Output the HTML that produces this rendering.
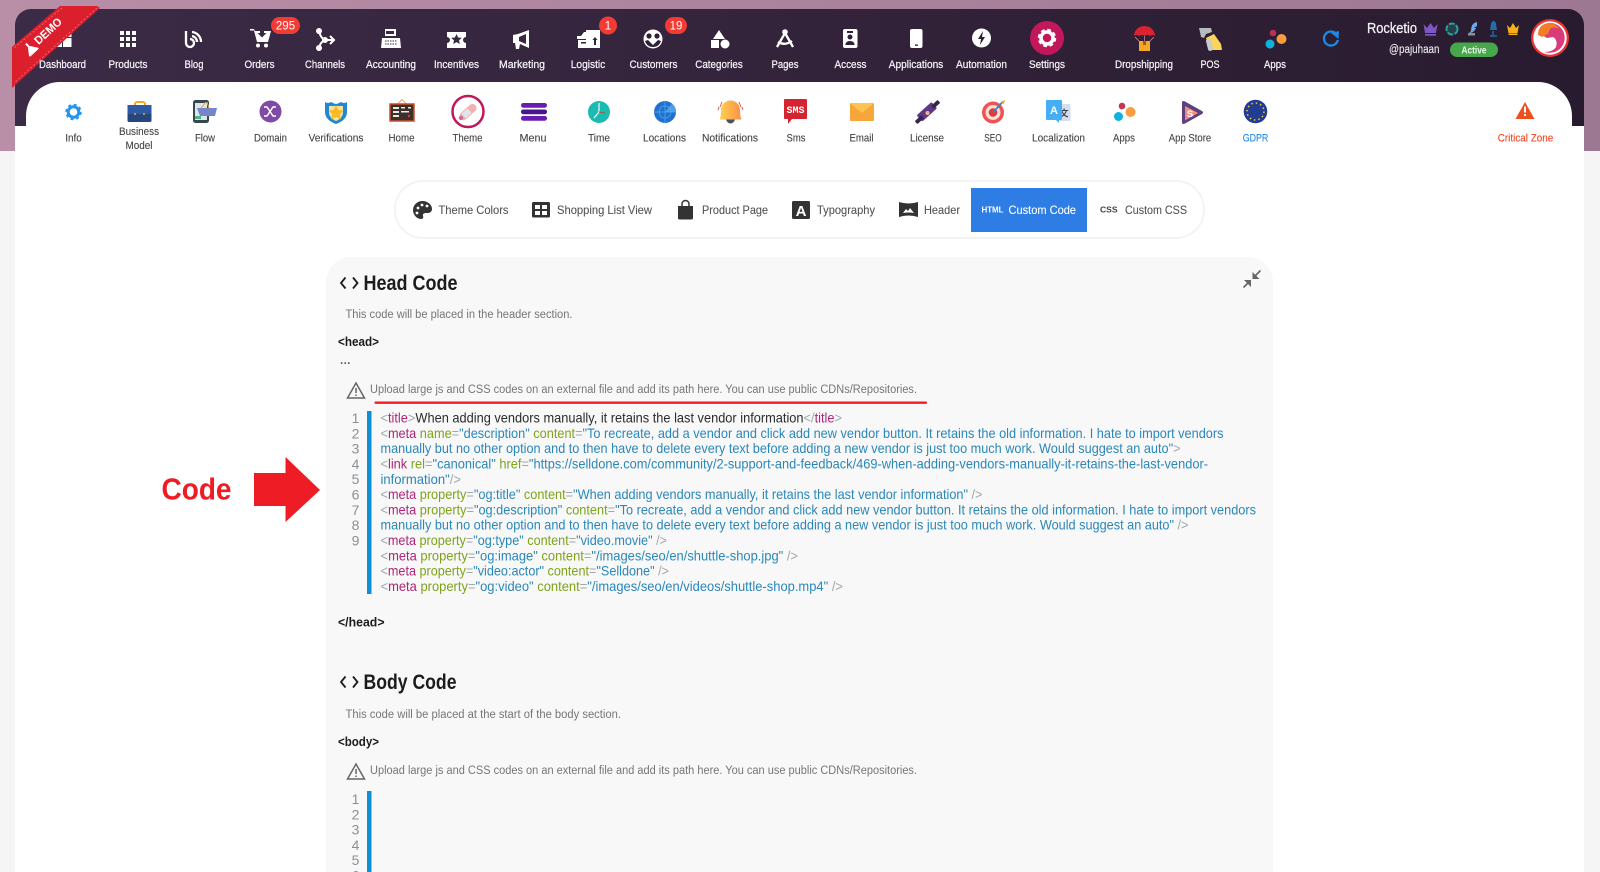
<!DOCTYPE html>
<html><head><meta charset="utf-8"><title>Custom Code</title>
<style>
html,body{margin:0;padding:0;width:1600px;height:872px;overflow:hidden;background:#fff}
svg{display:block}
text{font-family:"Liberation Sans",Arial,sans-serif}
.n{font-size:11px;fill:#f4f1f5;text-anchor:middle;stroke:#f4f1f5;stroke-width:.25}
.m{font-size:11px;fill:#444;text-anchor:middle;stroke:#444;stroke-width:.12}
.tb{font-size:12px;fill:#555;stroke:#555;stroke-width:.1}
.c{font-size:14px}
.t{fill:#ad2579}.a{fill:#7ea31a}.s{fill:#2a87ba}.p{fill:#a2a7ab}.d{fill:#2b2b2b}
.l{font-size:14px;fill:#8a9096;text-anchor:middle}
.h{font-size:21px;font-weight:bold;fill:#1c1c1c}
.g{font-size:11.5px;fill:#767676}
.k{font-size:12.5px;font-weight:bold;fill:#1c1c1c}
</style></head><body>
<svg width="1600" height="872" viewBox="0 0 1600 872" xmlns="http://www.w3.org/2000/svg">
<defs>
<linearGradient id="pk" x1="0" x2="1" y1="0" y2="0"><stop offset="0" stop-color="#b98ea7"/><stop offset="1" stop-color="#9d7893"/></linearGradient>
<linearGradient id="dk" x1="0" x2="1" y1="0" y2="0"><stop offset="0" stop-color="#3c2b46"/><stop offset="1" stop-color="#291b2f"/></linearGradient>
<linearGradient id="bell" x1="0" x2="1" y1="0" y2="0"><stop offset="0" stop-color="#ffd24f"/><stop offset="1" stop-color="#fb8f46"/></linearGradient>
<linearGradient id="st" x1="0" x2="1" y1="1" y2="0"><stop offset="0" stop-color="#e77fa0"/><stop offset="1" stop-color="#f7a35a"/></linearGradient>
</defs>
<rect width="1600" height="872" fill="#f5f5f5"/>
<rect width="1600" height="151" fill="url(#pk)"/>
<rect x="15" y="100" width="1569" height="772" fill="#fff"/>
<path d="M15 126V25a16 16 0 0 1 16-16H1568a16 16 0 0 1 16 16V126Z" fill="url(#dk)"/>
<path d="M26 126V116a34 34 0 0 1 34-34H1538a34 34 0 0 1 34 34V126Z" fill="#fff"/>

<!-- top nav icons -->
<g fill="#fff">
<!-- dashboard -->
<rect x="54" y="38" width="8" height="9"/><rect x="63" y="38" width="8.500" height="9"/><rect x="63" y="30" width="8.500" height="7"/>
<!-- products -->
<g><rect x="120" y="31" width="4" height="4"/><rect x="126" y="31" width="4" height="4"/><rect x="132" y="31" width="4" height="4"/><rect x="120" y="37" width="4" height="4"/><rect x="126" y="37" width="4" height="4"/><rect x="132" y="37" width="4" height="4"/><rect x="120" y="43" width="4" height="4"/><rect x="126" y="43" width="4" height="4"/><rect x="132" y="43" width="4" height="4"/></g>
<!-- blog -->
<g fill="none" stroke="#fff" stroke-width="2.300"><path d="M186 31V43a4 4 0 1 0 4-4"/><path d="M192 32a10 10 0 0 1 9 10"/><path d="M192 36a6 6 0 0 1 5 6"/></g>
<!-- orders -->
<path d="M250 29h4l.8 2H271l-3 11h-11l-3-11.500h-4Z"/><circle cx="258" cy="45.500" r="2"/><circle cx="266" cy="45.500" r="2"/><path d="M260 29h4v4h2.500l-4.500 4.500-4.500-4.500h2.500Z" fill="#3a2a44"/>
<!-- channels -->
<g fill="none" stroke="#fff" stroke-width="2"><path d="M319 31q2 9 8 9h7M319 48q2-8 8-8M330 36l4 4-4 4"/></g><circle cx="319" cy="31" r="3"/><circle cx="319" cy="48" r="3"/><circle cx="325" cy="40" r="3"/>
<!-- accounting -->
<path d="M385 29h11v7h-11Z"/><path d="M382 38h18l1 10h-20Z"/><path d="M386 31h8v3h-8Z" fill="#3a2a44"/><path d="M385 41h12M385 44h12" stroke="#37273f" stroke-width="1" stroke-dasharray="1.500 1"/>
<!-- incentives -->
<path d="M447 32h19v5a3 3 0 0 0 0 6v5h-19v-5a3 3 0 0 0 0-6Z"/><path d="M456.500 34l1.600 3.500 3.700.4-2.800 2.500.8 3.600-3.300-1.900-3.300 1.900.8-3.600-2.800-2.500 3.700-.4Z" fill="#37273f"/>
<!-- marketing -->
<path d="M513 35l5-1 11-4v18l-9-4-1 5h-3l-1-6h-2Z"/><path d="M519 37l7-3v10l-7-3Z" fill="#37273f"/>
<!-- logistic -->
<path d="M586 30h14v18h-14Z"/><path d="M577 36h13v3h-13ZM578 40h11v8h-11Z"/><path d="M581 36l3-4h5l2 4Z"/><path d="M595 37l2.500 3h-1.500v5h-2v-5h-1.500Z" fill="#30223a"/><rect x="581" y="42" width="5" height="1.500" fill="#30223a"/>
<!-- customers -->
<circle cx="653" cy="39" r="9.500"/><circle cx="649" cy="36" r="2.600" fill="#30213a"/><circle cx="657" cy="36" r="2.600" fill="#30213a"/><path d="M645 41q2 6 8 6t8-6l-3-1-5 5-5-5Z" fill="#30213a"/>
<!-- categories -->
<path d="M719 30l6 9h-12Z"/><rect x="711" y="40" width="8" height="8"/><circle cx="725" cy="44" r="4.500"/>
<!-- pages -->
<g fill="none" stroke="#fff" stroke-width="2.300"><path d="M785 33l-8 14M785 33l8 14M778 42q7 4 14-1"/></g><circle cx="785" cy="32" r="2.800"/>
<!-- access -->
<rect x="843" y="29" width="14.500" height="19" rx="2"/><rect x="847" y="31" width="6" height="2" fill="#2f2037"/><circle cx="850" cy="37" r="2.500" fill="#2f2037"/><path d="M845.500 45q0-4 4.500-4t4.500 4Z" fill="#2f2037"/>
<!-- applications -->
<rect x="910" y="29" width="12.500" height="19" rx="2"/><rect x="915" y="44.500" width="3" height="1.300" fill="#2f2037"/>
<!-- automation -->
<circle cx="981.500" cy="38" r="9.500"/><path d="M983 31l-5 8h3l-1 6 5-8h-3Z" fill="#2d1f35"/>
<!-- settings -->
<circle cx="1047" cy="38" r="17" fill="#c2185b"/>
<g transform="translate(1047 38)"><circle r="7.500" fill="none" stroke="#fff" stroke-width="3.500" stroke-dasharray="3.400 2.490"/><circle r="6" fill="none" stroke="#fff" stroke-width="3.500"/></g>
</g>

<!-- dropshipping -->
<path d="M1134 36a10.500 10 0 0 1 21 0q-2.500-2-5 0q-3-2-5.500 0q-2.500-2-5 0q-3-2-5.500 0Z" fill="#d9232e"/>
<path d="M1135 37l7 7M1154 37l-7 7M1144.500 36v8" stroke="#f5a0a0" stroke-width=".6" fill="none"/>
<rect x="1139" y="41" width="11" height="10" fill="#f9a825"/><rect x="1143" y="41" width="3" height="4" fill="#a8561a"/>
<!-- POS -->
<path d="M1199 28h12l1 4-6 2-2 4-3-1-1-5Z" fill="#b6bbc0"/><path d="M1206 38l8-4 7 10 1 6h-10l-3-1Z" fill="#fdd45a"/><rect x="1207" y="39" width="5" height="12" rx="2" transform="rotate(-14 1209 45)" fill="#c8ccd0"/>
<!-- apps -->
<circle cx="1273" cy="33" r="3.300" fill="#b83350"/><circle cx="1281.500" cy="39" r="5" fill="#fb9d3c"/><circle cx="1270" cy="44" r="4.500" fill="#0db2dd"/>
<!-- refresh -->
<path d="M1337 35a7 7 0 1 0 .8 5" fill="none" stroke="#1e88e5" stroke-width="2.300"/><path d="M1331 33l8-2-.5 8Z" fill="#1e88e5"/>

<!-- ribbon -->
<path d="M60 6H97l3 2L12 88V47Z" fill="#dc1f2c"/>
<path d="M62 8L14 48M97 8L14 83" stroke="#f58a90" stroke-width=".6" stroke-dasharray="2 2" fill="none"/>
<path d="M29 42v4l-5 7a1 1 0 0 0 1 1.500h10a1 1 0 0 0 1-1.500l-5-7v-4Z" transform="rotate(-43 30 48)" fill="#fff"/>
<text x="48" y="35" font-size="11.500" font-weight="bold" fill="#fff" text-anchor="middle" transform="rotate(-43 48 31)" textLength="33" lengthAdjust="spacingAndGlyphs">DEMO</text>

<!-- sub icons -->
<g transform="translate(73.500 112)"><circle r="6.500" fill="none" stroke="#2196f3" stroke-width="3.500" stroke-dasharray="2.600 2.500"/><circle r="5.300" fill="none" stroke="#2196f3" stroke-width="3"/></g>
<path d="M134 104a3 3 0 0 1 3-3h6a3 3 0 0 1 3 3v2h-2v-2a1 1 0 0 0-1-1h-6a1 1 0 0 0-1 1v2h-2Z" fill="#f6a623"/><rect x="127.500" y="105" width="24" height="17" rx="1.500" fill="#26467f"/><rect x="127.500" y="105" width="24" height="9" fill="#2e5aa5"/><circle cx="135" cy="114" r="1" fill="#f6a623"/><circle cx="144" cy="114" r="1" fill="#f6a623"/>
<rect x="193" y="100" width="16" height="23" rx="2.500" fill="#37474f"/><rect x="195" y="103" width="12" height="17" fill="#d7e8ea"/><path d="M197 108h20l-2 8h-15Z" fill="#7585c7"/><path d="M201 108l5-6M209 108l-2-6" stroke="#f6a623" stroke-width="1" fill="none"/><rect x="195" y="116" width="6" height="3" fill="#51b37f"/>
<circle cx="270.500" cy="111.500" r="11" fill="#7e4aa6"/><path d="M264 107h3l6 9h3M264 116h3l6-9h3" fill="none" stroke="#fff" stroke-width="1.500"/>
<path d="M325 102q3 2 6 0 4 2 5 2 1 0 5-2 3 2 6 0v10q0 8-11 12-11-4-11-12Z" fill="#1e88d5"/><path d="M329 106h14v6q0 6-7 9-7-3-7-9Z" fill="#f7e1a0"/><path d="M336 105l2.500 5 5 .5-3.700 3.500 1 5.500-4.800-2.800-4.800 2.800 1-5.500-3.700-3.500 5-.5Z" fill="#fbb924"/>
<path d="M402 99.500l-5 5h10Z" fill="none" stroke="#f1a26a" stroke-width="1"/><rect x="390" y="104" width="24" height="17" fill="#3d2f2a" stroke="#c9502f" stroke-width="1.500"/><g fill="#e7e7e7"><rect x="393" y="107" width="6" height="2"/><rect x="393" y="111" width="6" height="2"/><rect x="393" y="115" width="6" height="2"/><rect x="401" y="107" width="4" height="1.500"/><rect x="401" y="111" width="8" height="1.500"/><rect x="408" y="107" width="3" height="1.500"/></g><circle cx="409" cy="116" r="1.200" fill="#e53935"/>
<circle cx="468" cy="111.500" r="15.500" fill="#fff" stroke="#c2185b" stroke-width="2.500"/><rect x="458" y="108" width="20" height="8" rx="4" transform="rotate(-42 468 112)" fill="#f2b1ac"/><rect x="462" y="109" width="8" height="6" transform="rotate(-42 468 112)" fill="#dfe7ee"/><circle cx="461" cy="118" r="2.200" fill="#c770a0"/>
<rect x="521" y="103" width="26" height="4.700" rx="2.300" fill="#6a1bb0"/><rect x="521" y="109.500" width="26" height="4.700" rx="2.300" fill="#4a148c"/><rect x="521" y="116" width="26" height="4.700" rx="2.300" fill="#6a1bb0"/>
<circle cx="599" cy="112" r="11" fill="#1dbab2"/><path d="M599 103v9l-5 6" stroke="#fff" stroke-width="1.100" fill="none"/><path d="M599 112l6 1" stroke="#9c5a3a" stroke-width="1" fill="none"/>
<circle cx="665" cy="112" r="11" fill="#1f72cf"/><path d="M665 112l7-8.500a11 11 0 0 1 4 8.500Z" fill="#4f9fe8"/><path d="M654 112h22M665 101v22" stroke="#5aa8ec" stroke-width=".7" fill="none"/><circle cx="665" cy="112" r="6" fill="none" stroke="#5aa8ec" stroke-width=".7"/>
<path d="M730.500 100.500a9.500 9.500 0 0 1 9.500 9.500q0 7 1.500 9.500h-22q1.500-2.500 1.500-9.500a9.500 9.500 0 0 1 9.500-9.500Z" fill="url(#bell)"/><path d="M726 119.500h9q-1.500 4-4.500 4t-4.500-4Z" fill="#47505d"/><path d="M720 107l2-5M741 107l-2-5M718 110l1-3M743 110l-1-3" stroke="#e2574c" stroke-width="1" fill="none"/>
<path d="M785 99h21a1 1 0 0 1 1 1v18a1 1 0 0 1-1 1h-14l-4 5v-5h-3a1 1 0 0 1-1-1v-18a1 1 0 0 1 1-1Z" fill="#d32430"/><text x="795.500" y="113" font-size="10" font-weight="bold" fill="#fff" text-anchor="middle" textLength="18" lengthAdjust="spacingAndGlyphs" style="font-family:'Liberation Mono',monospace">SMS</text>
<rect x="850" y="103" width="24" height="18" rx="1" fill="#f7a63b"/><path d="M850 103h24l-12 10Z" fill="#fec44f"/>
<rect x="917" y="107.500" width="20" height="8.500" rx="1.500" transform="rotate(-42 927 112)" fill="#5e3a86"/><rect x="934" y="100" width="4" height="9" rx="1" transform="rotate(48 936 104)" fill="#34274a"/><rect x="917" y="115" width="4" height="9" rx="1" transform="rotate(48 919 120)" fill="#34274a"/><circle cx="927.500" cy="113" r="2" fill="#f1b58f"/>
<circle cx="993" cy="112.500" r="11" fill="#ef5350"/><circle cx="993" cy="112.500" r="7.500" fill="#fbe0dd"/><circle cx="993" cy="112.500" r="4.300" fill="#e53935"/><path d="M993 112.500l10-11" stroke="#2f86d8" stroke-width="1.800"/><path d="M1001 102l4-2-1 4Z" fill="#f6a623"/>
<rect x="1057" y="104" width="13.500" height="17" rx="1" fill="#d5def0"/><text x="1064" y="116.500" font-size="9" font-weight="bold" fill="#37474f" text-anchor="middle" style="font-family:'Liberation Sans','Noto Sans CJK SC',sans-serif">文</text><path d="M1047 100h14a1 1 0 0 1 1 1v18a1 1 0 0 1-1 1h-2v3l-3-3h-9a1 1 0 0 1-1-1v-18a1 1 0 0 1 1-1Z" fill="#45aef5"/><text x="1054" y="114" font-size="11" font-weight="bold" fill="#fff" text-anchor="middle">A</text>
<circle cx="1122" cy="106" r="3.300" fill="#c8344f"/><circle cx="1130.500" cy="112" r="5" fill="#fb9d3c"/><circle cx="1118.500" cy="116.500" r="4.500" fill="#0db2dd"/>
<path d="M1182 103q0-3 3-1.500l17 9.500q2 1.500 0 3l-17 9.500q-3 1.500-3-1.500Z" fill="#5e3f7f"/><path d="M1185 106l13 7-13 7.500Z" fill="url(#st)"/><text x="1190" y="117" font-size="9.500" font-weight="bold" fill="#fff" text-anchor="middle">S</text>
<circle cx="1255.500" cy="111.500" r="11.800" fill="#233c93"/><circle cx="1255.500" cy="111.500" r="8.500" fill="none" stroke="#f6cb2f" stroke-width="1.500" stroke-dasharray="1.500 2.950"/>
<path d="M1525 102l9.500 17h-19Z" fill="#ef4f1e"/><rect x="1524" y="106.500" width="2" height="6" fill="#fff"/><rect x="1524" y="114" width="2" height="2" fill="#fff"/>

<!-- badges -->
<rect x="271" y="17" width="29" height="17" rx="8.500" fill="#f33b33"/><text x="285.500" y="29.500" font-size="11.500" fill="#fff" text-anchor="middle">295</text>
<circle cx="608" cy="25.500" r="9" fill="#f33b33"/><text x="608" y="29.500" font-size="11.500" fill="#fff" text-anchor="middle">1</text>
<rect x="665" y="17" width="22" height="17" rx="8.500" fill="#f33b33"/><text x="676" y="29.500" font-size="11.500" fill="#fff" text-anchor="middle">19</text>

<!-- top labels -->
<text class="n" x="62.500" y="68" textLength="47" lengthAdjust="spacingAndGlyphs">Dashboard</text>
<text class="n" x="128" y="68" textLength="39" lengthAdjust="spacingAndGlyphs">Products</text>
<text class="n" x="194" y="68" textLength="19" lengthAdjust="spacingAndGlyphs">Blog</text>
<text class="n" x="259.500" y="68" textLength="30" lengthAdjust="spacingAndGlyphs">Orders</text>
<text class="n" x="325" y="68" textLength="40" lengthAdjust="spacingAndGlyphs">Channels</text>
<text class="n" x="391" y="68" textLength="50" lengthAdjust="spacingAndGlyphs">Accounting</text>
<text class="n" x="456.500" y="68" textLength="45" lengthAdjust="spacingAndGlyphs">Incentives</text>
<text class="n" x="522" y="68" textLength="46" lengthAdjust="spacingAndGlyphs">Marketing</text>
<text class="n" x="588" y="68" textLength="34.500" lengthAdjust="spacingAndGlyphs">Logistic</text>
<text class="n" x="653.500" y="68" textLength="48" lengthAdjust="spacingAndGlyphs">Customers</text>
<text class="n" x="719" y="68" textLength="47.500" lengthAdjust="spacingAndGlyphs">Categories</text>
<text class="n" x="785" y="68" textLength="27" lengthAdjust="spacingAndGlyphs">Pages</text>
<text class="n" x="850.500" y="68" textLength="32" lengthAdjust="spacingAndGlyphs">Access</text>
<text class="n" x="916" y="68" textLength="54.500" lengthAdjust="spacingAndGlyphs">Applications</text>
<text class="n" x="981.500" y="68" textLength="51" lengthAdjust="spacingAndGlyphs">Automation</text>
<text class="n" x="1047" y="68" textLength="36" lengthAdjust="spacingAndGlyphs">Settings</text>
<text class="n" x="1144" y="68" textLength="58" lengthAdjust="spacingAndGlyphs">Dropshipping</text>
<text class="n" x="1210" y="68" textLength="19" lengthAdjust="spacingAndGlyphs">POS</text>
<text class="n" x="1275" y="68" textLength="22" lengthAdjust="spacingAndGlyphs">Apps</text>

<!-- user -->
<text x="1367" y="33" font-size="14.500" fill="#f2eff4" stroke="#f2eff4" stroke-width=".3" textLength="50" lengthAdjust="spacingAndGlyphs">Rocketio</text>
<text x="1389" y="53" font-size="11.500" fill="#e8e4ea" stroke="#e8e4ea" stroke-width=".15" textLength="50.500" lengthAdjust="spacingAndGlyphs">@pajuhaan</text>
<rect x="1450" y="42.500" width="48" height="14.500" rx="7.250" fill="#47a84b"/>
<text x="1474" y="53.700" font-size="10.500" font-weight="bold" fill="#eef7ee" text-anchor="middle" textLength="25" lengthAdjust="spacingAndGlyphs">Active</text>
<path d="M1423.500 24l3.500 4 3.500-5 3.500 5 3.500-4-1.500 9h-11Z" fill="#7e57c2"/><rect x="1425" y="34" width="11" height="1.700" fill="#7e57c2"/>
<circle cx="1452" cy="29" r="5.500" fill="#263f4b" stroke="#2aa198" stroke-width="2" stroke-dasharray="6 1.500"/>
<path d="M1477 22q-6 1-6 9l-2 2q5 0 7-5l-2 0 3-2Z" fill="#6ea6ea"/><rect x="1468" y="33" width="7" height="2.500" fill="#8a8f94"/>
<path d="M1491 24a2.500 3 0 0 1 5 0l1 6h-7Z" fill="#1f6fa8"/><path d="M1493 31v4M1490 36h7" stroke="#1f6fa8" stroke-width="1.400" fill="none"/>
<path d="M1507 25l3 3 3-5 3 5 3-3-1.500 8h-9Z" fill="#fbb01a"/><rect x="1508.500" y="33.500" width="9" height="1.500" fill="#fbb01a"/>
<circle cx="1550" cy="38" r="19" fill="#e8352f"/><circle cx="1550" cy="38" r="16.700" fill="#fff"/>
<path d="M1548 23a15 15 0 0 1 9 28q-6 3-13 1q9 0 12-5 2-7-3-10l-6 1-5-3q1-8 6-12Z" fill="#d83a7a"/><path d="M1538 35q0-11 11-12 7 0 10 6-5-3-9 0l-2 5-6 3Z" fill="#f57c26"/>

<!-- tabs -->
<rect x="395" y="181" width="809" height="57" rx="28" fill="#fff" stroke="#f3f3f3" stroke-width="2"/>
<rect x="971" y="188" width="116" height="44" fill="#2d7de4"/>
<path d="M422.500 201a9.500 9 0 0 0-9.500 9c0 5 4 9 8 9 2.500 0 2.500-2 2-3-.5-2 1-3 3-3h2c2.500 0 4-2 4-4 0-4.500-4.500-8-9.500-8Z" fill="#333"/><circle cx="418" cy="208" r="1.400" fill="#fff"/><circle cx="422" cy="205" r="1.400" fill="#fff"/><circle cx="427" cy="206" r="1.400" fill="#fff"/><circle cx="417" cy="213" r="1.400" fill="#fff"/>
<text class="tb" x="438.500" y="214" textLength="70" lengthAdjust="spacingAndGlyphs">Theme Colors</text>
<rect x="532" y="202" width="18" height="15.500" rx="1.500" fill="#333"/><g fill="#fff"><rect x="535" y="205" width="5" height="4"/><rect x="542" y="205" width="5" height="4"/><rect x="535" y="211" width="5" height="4"/><rect x="542" y="211" width="5" height="4"/></g>
<text class="tb" x="557" y="214" textLength="95" lengthAdjust="spacingAndGlyphs">Shopping List View</text>
<path d="M678 206h15v12a1.500 1.500 0 0 1-1.500 1.500h-12a1.500 1.500 0 0 1-1.500-1.500Z" fill="#333"/><path d="M682 207v-3a3.500 3.500 0 0 1 7 0v3" fill="none" stroke="#333" stroke-width="1.500"/>
<text class="tb" x="702" y="214" textLength="66" lengthAdjust="spacingAndGlyphs">Product Page</text>
<rect x="792" y="201" width="18" height="18" rx="1.500" fill="#333"/><text x="801" y="216" font-size="15" font-weight="bold" fill="#fff" text-anchor="middle">A</text>
<text class="tb" x="817" y="214" textLength="58" lengthAdjust="spacingAndGlyphs">Typography</text>
<path d="M899 202q9.500 3 19 0v15q-9.500-3-19 0Z" fill="#333"/><path d="M903 213l3-4 2 2 2-3 4 5q-5-1-11 0Z" fill="#fff"/>
<text class="tb" x="924" y="214" textLength="36" lengthAdjust="spacingAndGlyphs">Header</text>
<text x="981.500" y="212.500" font-size="8" font-weight="bold" fill="#fff" textLength="22" lengthAdjust="spacingAndGlyphs">HTML</text>
<text class="tb" x="1008.500" y="214" textLength="67.500" lengthAdjust="spacingAndGlyphs" style="fill:#fff;stroke:#fff">Custom Code</text>
<text x="1100" y="212.500" font-size="8" font-weight="bold" fill="#444" textLength="17.500" lengthAdjust="spacingAndGlyphs">CSS</text>
<text class="tb" x="1125" y="214" textLength="62" lengthAdjust="spacingAndGlyphs">Custom CSS</text>

<!-- panel -->
<path d="M326 872V282a25 25 0 0 1 25-25H1248a25 25 0 0 1 25 25V872Z" fill="#f8f8f8"/>
<path d="M1260.500 270.500l-6 6M1243.500 287.500l-5 0" stroke="none" fill="none"/>
<path d="M1260.500 270.500l-5.500 5.500M1243.500 287.500l5.500-5.500" stroke="#666" stroke-width="1.600" fill="none"/>
<path d="M1252.500 279v-7l7 7ZM1251 280v7l-7-7Z" fill="#666"/>

<!-- head -->
<path d="M345.500 277.500l-4.500 5.500 4.500 5.500M353 277.500l4.500 5.500-4.500 5.500" fill="none" stroke="#1c1c1c" stroke-width="1.800"/>
<text class="h" x="363.500" y="290" textLength="94" lengthAdjust="spacingAndGlyphs">Head Code</text>
<text class="g" x="345.500" y="318" textLength="227" lengthAdjust="spacingAndGlyphs">This code will be placed in the header section.</text>
<text class="k" x="338" y="346" textLength="41" lengthAdjust="spacingAndGlyphs">&lt;head&gt;</text>
<text x="340" y="364" font-size="12" font-weight="bold" fill="#666" textLength="10.500" lengthAdjust="spacing">...</text>
<path d="M356 383l8.500 15h-17Z" fill="none" stroke="#666" stroke-width="1.500"/><rect x="355.300" y="388" width="1.500" height="5" fill="#666"/><rect x="355.300" y="394.500" width="1.500" height="1.500" fill="#666"/>
<text class="g" x="370" y="393" textLength="547" lengthAdjust="spacingAndGlyphs">Upload large js and CSS codes on an external file and add its path here. You can use public CDNs/Repositories.</text>
<rect x="374.500" y="401.500" width="552.500" height="2.400" rx="1" fill="#ee1c25"/>

<rect x="367" y="411" width="4.500" height="183" fill="#0e8fd6"/>
<g><text class="l" x="355.500" y="423">1</text><text class="l" x="355.500" y="438.300">2</text><text class="l" x="355.500" y="453.600">3</text><text class="l" x="355.500" y="468.900">4</text><text class="l" x="355.500" y="484.200">5</text><text class="l" x="355.500" y="499.500">6</text><text class="l" x="355.500" y="514.800">7</text><text class="l" x="355.500" y="530.100">8</text><text class="l" x="355.500" y="545.400">9</text></g>

<g transform="translate(0 -.4)">
<text class="c" x="380.500" y="423" textLength="461.500" lengthAdjust="spacingAndGlyphs"><tspan class="p">&lt;</tspan><tspan class="t">title</tspan><tspan class="p">&gt;</tspan><tspan class="d">When adding vendors manually, it retains the last vendor information</tspan><tspan class="p">&lt;/</tspan><tspan class="t">title</tspan><tspan class="p">&gt;</tspan></text>
<text class="c" x="380.500" y="438.300" textLength="843" lengthAdjust="spacingAndGlyphs"><tspan class="p">&lt;</tspan><tspan class="t">meta</tspan> <tspan class="a">name</tspan><tspan class="p">=</tspan><tspan class="s">"description"</tspan> <tspan class="a">content</tspan><tspan class="p">=</tspan><tspan class="s">"To recreate, add a vendor and click add new vendor button. It retains the old information. I hate to import vendors</tspan></text>
<text class="c" x="380.500" y="453.600" textLength="800" lengthAdjust="spacingAndGlyphs"><tspan class="s">manually but no other option and to then have to delete every text before adding a new vendor is just too much work. Would suggest an auto"</tspan><tspan class="p">&gt;</tspan></text>
<text class="c" x="380.500" y="468.900" textLength="827.500" lengthAdjust="spacingAndGlyphs"><tspan class="p">&lt;</tspan><tspan class="t">link</tspan> <tspan class="a">rel</tspan><tspan class="p">=</tspan><tspan class="s">"canonical"</tspan> <tspan class="a">href</tspan><tspan class="p">=</tspan><tspan class="s">"https://selldone.com/community/2-support-and-feedback/469-when-adding-vendors-manually-it-retains-the-last-vendor-</tspan></text>
<text class="c" x="380.500" y="484.200" textLength="80.500" lengthAdjust="spacingAndGlyphs"><tspan class="s">information"</tspan><tspan class="p">/&gt;</tspan></text>
<text class="c" x="380.500" y="499.500" textLength="602" lengthAdjust="spacingAndGlyphs"><tspan class="p">&lt;</tspan><tspan class="t">meta</tspan> <tspan class="a">property</tspan><tspan class="p">=</tspan><tspan class="s">"og:title"</tspan> <tspan class="a">content</tspan><tspan class="p">=</tspan><tspan class="s">"When adding vendors manually, it retains the last vendor information"</tspan> <tspan class="p">/&gt;</tspan></text>
<text class="c" x="380.500" y="514.800" textLength="875.500" lengthAdjust="spacingAndGlyphs"><tspan class="p">&lt;</tspan><tspan class="t">meta</tspan> <tspan class="a">property</tspan><tspan class="p">=</tspan><tspan class="s">"og:description"</tspan> <tspan class="a">content</tspan><tspan class="p">=</tspan><tspan class="s">"To recreate, add a vendor and click add new vendor button. It retains the old information. I hate to import vendors</tspan></text>
<text class="c" x="380.500" y="530.100" textLength="808" lengthAdjust="spacingAndGlyphs"><tspan class="s">manually but no other option and to then have to delete every text before adding a new vendor is just too much work. Would suggest an auto"</tspan> <tspan class="p">/&gt;</tspan></text>
<text class="c" x="380.500" y="545.400" textLength="286.500" lengthAdjust="spacingAndGlyphs"><tspan class="p">&lt;</tspan><tspan class="t">meta</tspan> <tspan class="a">property</tspan><tspan class="p">=</tspan><tspan class="s">"og:type"</tspan> <tspan class="a">content</tspan><tspan class="p">=</tspan><tspan class="s">"video.movie"</tspan> <tspan class="p">/&gt;</tspan></text>
<text class="c" x="380.500" y="560.700" textLength="417.500" lengthAdjust="spacingAndGlyphs"><tspan class="p">&lt;</tspan><tspan class="t">meta</tspan> <tspan class="a">property</tspan><tspan class="p">=</tspan><tspan class="s">"og:image"</tspan> <tspan class="a">content</tspan><tspan class="p">=</tspan><tspan class="s">"/images/seo/en/shuttle-shop.jpg"</tspan> <tspan class="p">/&gt;</tspan></text>
<text class="c" x="380.500" y="576" textLength="288.500" lengthAdjust="spacingAndGlyphs"><tspan class="p">&lt;</tspan><tspan class="t">meta</tspan> <tspan class="a">property</tspan><tspan class="p">=</tspan><tspan class="s">"video:actor"</tspan> <tspan class="a">content</tspan><tspan class="p">=</tspan><tspan class="s">"Selldone"</tspan> <tspan class="p">/&gt;</tspan></text>
<text class="c" x="380.500" y="591.300" textLength="462.500" lengthAdjust="spacingAndGlyphs"><tspan class="p">&lt;</tspan><tspan class="t">meta</tspan> <tspan class="a">property</tspan><tspan class="p">=</tspan><tspan class="s">"og:video"</tspan> <tspan class="a">content</tspan><tspan class="p">=</tspan><tspan class="s">"/images/seo/en/videos/shuttle-shop.mp4"</tspan> <tspan class="p">/&gt;</tspan></text>
</g>

<text class="k" x="338" y="626.500" textLength="46.500" lengthAdjust="spacingAndGlyphs">&lt;/head&gt;</text>

<!-- sub labels -->
<text class="m" x="73.500" y="141.500" textLength="16.500" lengthAdjust="spacingAndGlyphs">Info</text>
<text class="m" x="139" y="135" textLength="40" lengthAdjust="spacingAndGlyphs">Business</text>
<text class="m" x="139" y="149" textLength="27" lengthAdjust="spacingAndGlyphs">Model</text>
<text class="m" x="205" y="141.500" textLength="20" lengthAdjust="spacingAndGlyphs">Flow</text>
<text class="m" x="270.500" y="141.500" textLength="33" lengthAdjust="spacingAndGlyphs">Domain</text>
<text class="m" x="336" y="141.500" textLength="55" lengthAdjust="spacingAndGlyphs">Verifications</text>
<text class="m" x="401.500" y="141.500" textLength="26" lengthAdjust="spacingAndGlyphs">Home</text>
<text class="m" x="467.500" y="141.500" textLength="30" lengthAdjust="spacingAndGlyphs">Theme</text>
<text class="m" x="533" y="141.500" textLength="27" lengthAdjust="spacingAndGlyphs">Menu</text>
<text class="m" x="599" y="141.500" textLength="22" lengthAdjust="spacingAndGlyphs">Time</text>
<text class="m" x="664.500" y="141.500" textLength="43" lengthAdjust="spacingAndGlyphs">Locations</text>
<text class="m" x="730" y="141.500" textLength="56" lengthAdjust="spacingAndGlyphs">Notifications</text>
<text class="m" x="796" y="141.500" textLength="19" lengthAdjust="spacingAndGlyphs">Sms</text>
<text class="m" x="861.500" y="141.500" textLength="24" lengthAdjust="spacingAndGlyphs">Email</text>
<text class="m" x="927" y="141.500" textLength="34" lengthAdjust="spacingAndGlyphs">License</text>
<text class="m" x="993" y="141.500" textLength="17.500" lengthAdjust="spacingAndGlyphs">SEO</text>
<text class="m" x="1058.500" y="141.500" textLength="53" lengthAdjust="spacingAndGlyphs">Localization</text>
<text class="m" x="1124" y="141.500" textLength="22" lengthAdjust="spacingAndGlyphs">Apps</text>
<text class="m" x="1190" y="141.500" textLength="42.500" lengthAdjust="spacingAndGlyphs">App Store</text>
<text class="m" x="1255.500" y="141.500" textLength="25.500" lengthAdjust="spacingAndGlyphs" style="fill:#1e88e5;stroke:#1e88e5">GDPR</text>
<text class="m" x="1525.500" y="141.500" textLength="55.500" lengthAdjust="spacingAndGlyphs" style="fill:#f4431f;stroke:#f4431f">Critical Zone</text>

<!-- body -->
<path d="M345.500 676.500l-4.500 5.500 4.500 5.500M353 676.500l4.500 5.500-4.500 5.500" fill="none" stroke="#1c1c1c" stroke-width="1.800"/>
<text class="h" x="363.500" y="689" textLength="93" lengthAdjust="spacingAndGlyphs">Body Code</text>
<text class="g" x="345.500" y="718" textLength="275.500" lengthAdjust="spacingAndGlyphs">This code will be placed at the start of the body section.</text>
<text class="k" x="338" y="746" textLength="41" lengthAdjust="spacingAndGlyphs">&lt;body&gt;</text>
<path d="M356 764l8.500 15h-17Z" fill="none" stroke="#666" stroke-width="1.500"/><rect x="355.300" y="769" width="1.500" height="5" fill="#666"/><rect x="355.300" y="775.500" width="1.500" height="1.500" fill="#666"/>
<text class="g" x="370" y="774" textLength="547" lengthAdjust="spacingAndGlyphs">Upload large js and CSS codes on an external file and add its path here. You can use public CDNs/Repositories.</text>
<rect x="367" y="791" width="4.500" height="81" fill="#0e8fd6"/>
<g><text class="l" x="355.500" y="804">1</text><text class="l" x="355.500" y="819.300">2</text><text class="l" x="355.500" y="834.600">3</text><text class="l" x="355.500" y="849.900">4</text><text class="l" x="355.500" y="865.200">5</text><text class="l" x="355.500" y="880.500">6</text></g>

<!-- annotation -->
<text x="161.500" y="499.500" font-size="31" font-weight="bold" fill="#ee1c25" textLength="70" lengthAdjust="spacingAndGlyphs">Code</text>
<path d="M254 473H285.500V457L320 490L285.500 522V506H254Z" fill="#ee1c25"/>
</svg>
</body></html>
